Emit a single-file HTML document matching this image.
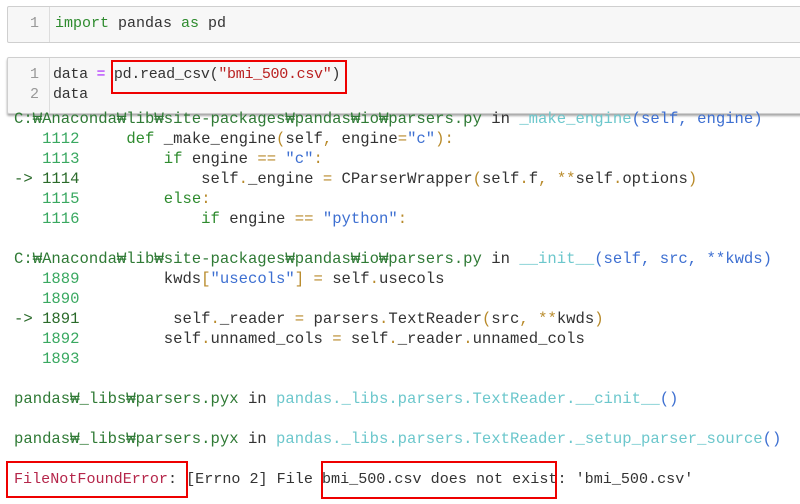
<!DOCTYPE html>
<html><head><style>
body{margin:0;width:800px;height:504px;background:#fff;position:relative;overflow:hidden;font-family:"Liberation Mono",monospace;}
.cell{position:absolute;left:7px;width:800px;background:#f7f7f7;border:1px solid #cfcfcf;border-radius:2px;}
.gut{position:absolute;left:0;top:0;bottom:0;width:41px;border-right:1px solid #ddd;}
.c{position:absolute;white-space:pre;font-size:15px;line-height:20px;color:#333;}
.n{position:absolute;white-space:pre;font-size:15px;line-height:20px;color:#999;}
.t{position:absolute;left:14px;white-space:pre;font-size:15.6px;line-height:20px;color:#333;}
.g{color:#3a8a3a}.hd{color:#2f7a35}.ln{color:#39a860}.ar{color:#2a6a2a}
.kw{color:#2e8b2e}.s{color:#3d6fd1}.o{color:#b88a2a}.cy{color:#6cc7cc}.r{color:#ba2121}.p{color:#aa22ff}.e{color:#b5264a}
.box{position:absolute;border:2px solid #e00;}
</style></head><body>
<div class="cell" style="top:6px;height:35px"><div class="gut"></div></div>
<div class="n" style="left:30px;top:14px">1</div>
<div class="c" style="left:55px;top:14px"><span class="kw">import</span> pandas <span class="kw">as</span> pd</div>

<div class="cell" style="top:57px;height:55px;box-shadow:0 2px 2px rgba(0,0,0,.35)"><div class="gut"></div></div>
<div class="n" style="left:30px;top:65px">1
2</div>
<div class="c" style="left:53px;top:65px;letter-spacing:-0.3px">data <span class="p">=</span> pd.read_csv(<span class="r">"bmi_500.csv"</span>)
data</div>
<div class="box" style="left:111px;top:60px;width:232px;height:30px"></div>

<div class="t" style="top:109px"><span class="hd">C:₩Anaconda₩lib₩site-packages₩pandas₩io₩parsers.py</span> in <span class="cy">_make_engine</span><span class="s">(self, engine)</span>
<span class="ln">   1112</span>     <span class="kw">def</span> _make_engine<span class="o">(</span>self<span class="o">,</span> engine<span class="o">=</span><span class="s">"c"</span><span class="o">):</span>
<span class="ln">   1113</span>         <span class="kw">if</span> engine <span class="o">==</span> <span class="s">"c"</span><span class="o">:</span>
<span class="ar">-&gt; 1114</span>             self<span class="o">.</span>_engine <span class="o">=</span> CParserWrapper<span class="o">(</span>self<span class="o">.</span>f<span class="o">,</span> <span class="o">**</span>self<span class="o">.</span>options<span class="o">)</span>
<span class="ln">   1115</span>         <span class="kw">else</span><span class="o">:</span>
<span class="ln">   1116</span>             <span class="kw">if</span> engine <span class="o">==</span> <span class="s">"python"</span><span class="o">:</span>

<span class="hd">C:₩Anaconda₩lib₩site-packages₩pandas₩io₩parsers.py</span> in <span class="cy">__init__</span><span class="s">(self, src, **kwds)</span>
<span class="ln">   1889</span>         kwds<span class="o">[</span><span class="s">"usecols"</span><span class="o">]</span> <span class="o">=</span> self<span class="o">.</span>usecols
<span class="ln">   1890</span>
<span class="ar">-&gt; 1891</span>          self<span class="o">.</span>_reader <span class="o">=</span> parsers<span class="o">.</span>TextReader<span class="o">(</span>src<span class="o">,</span> <span class="o">**</span>kwds<span class="o">)</span>
<span class="ln">   1892</span>         self<span class="o">.</span>unnamed_cols <span class="o">=</span> self<span class="o">.</span>_reader<span class="o">.</span>unnamed_cols
<span class="ln">   1893</span>

<span class="hd">pandas₩_libs₩parsers.pyx</span> in <span class="cy">pandas._libs.parsers.TextReader.__cinit__</span><span class="s">()</span>

<span class="hd">pandas₩_libs₩parsers.pyx</span> in <span class="cy">pandas._libs.parsers.TextReader._setup_parser_source</span><span class="s">()</span></div>
<div class="t" style="top:469px;font-size:15.1px"><span class="e">FileNotFoundError</span>: [Errno 2] File bmi_500.csv does not exist: 'bmi_500.csv'</div>
<div class="box" style="left:6px;top:461px;width:178px;height:33px"></div>
<div class="box" style="left:321px;top:461px;width:232px;height:34px"></div>
</body></html>
